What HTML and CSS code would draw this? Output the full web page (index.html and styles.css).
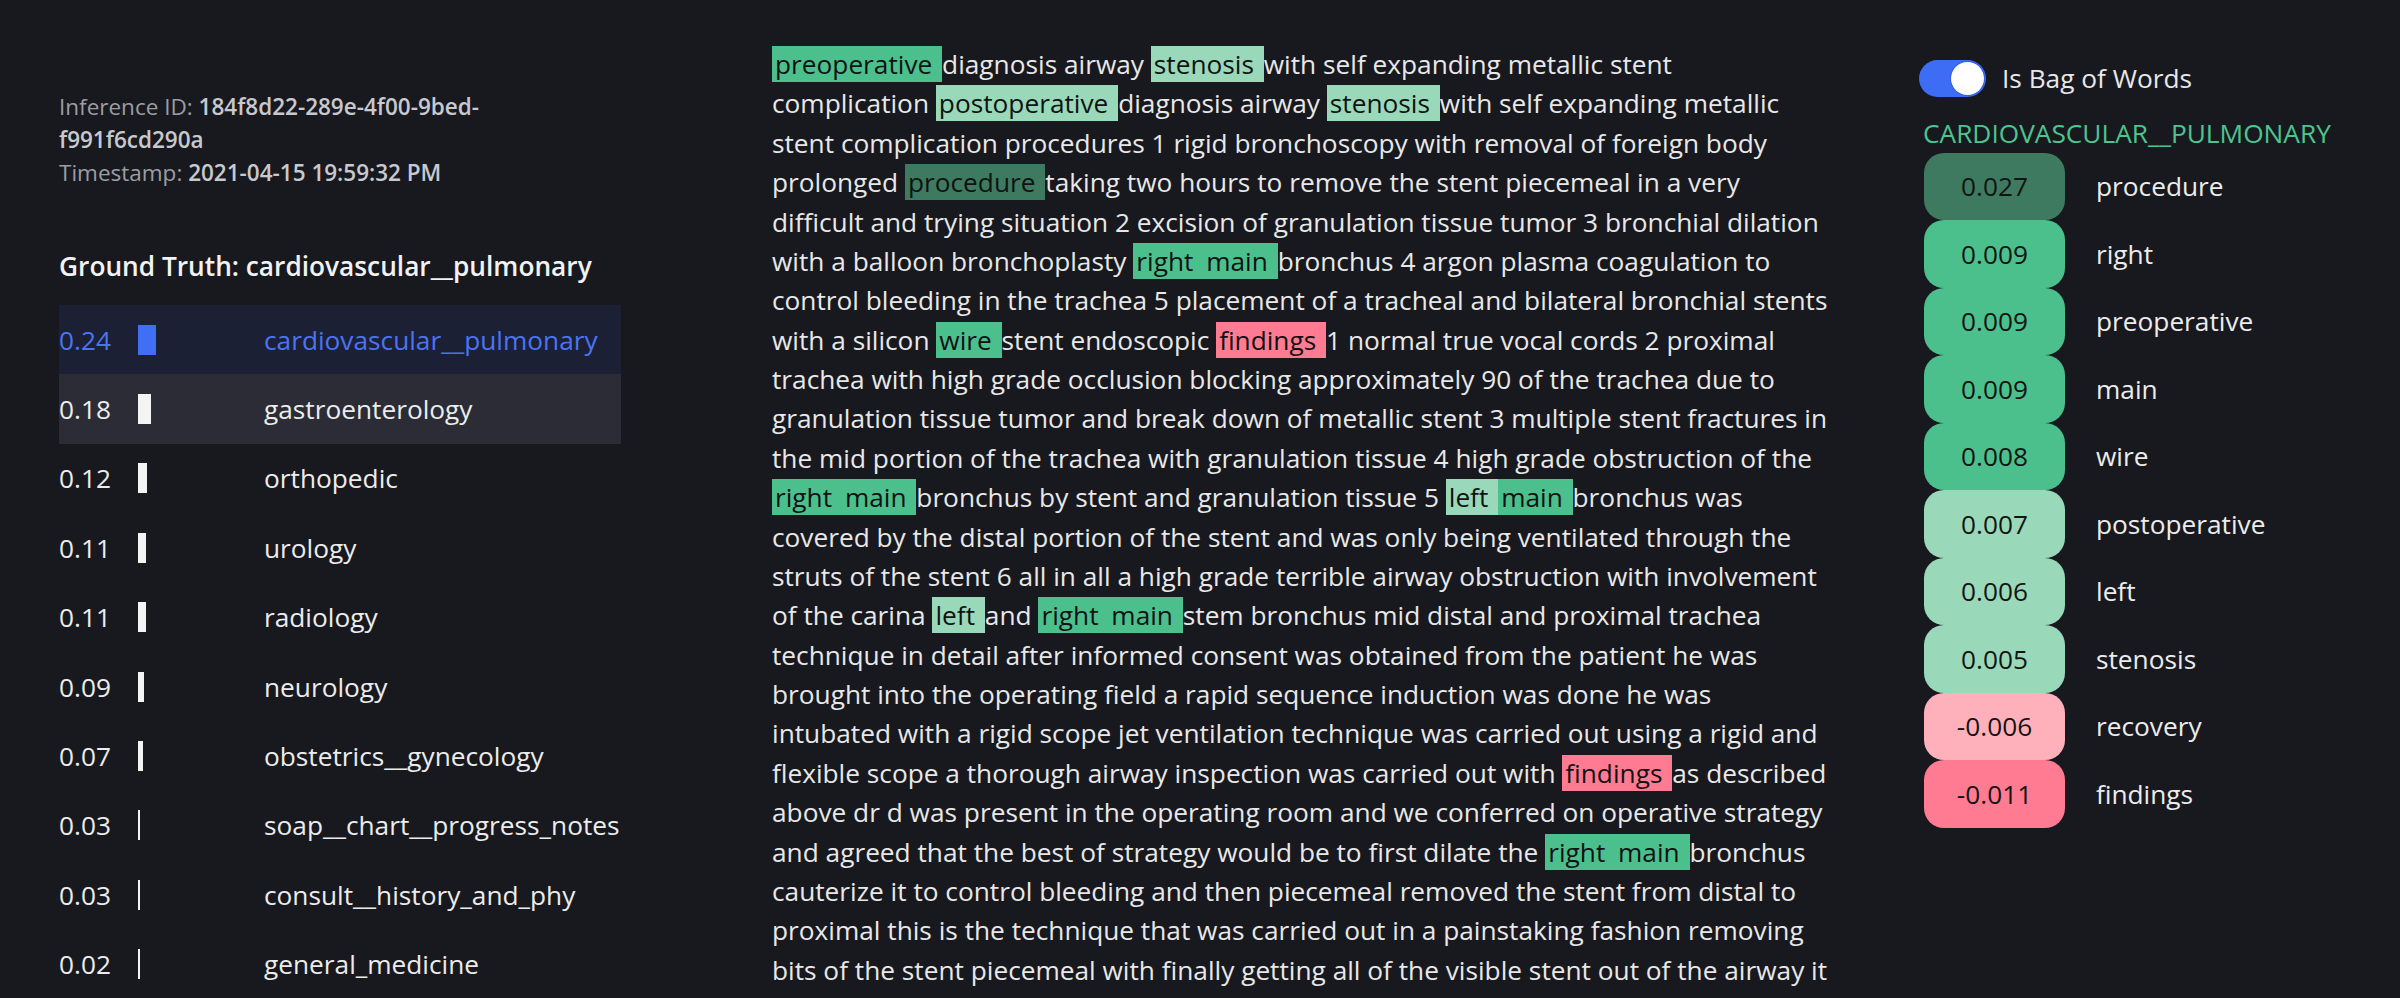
FILE: index.html
```html
<!DOCTYPE html>
<html lang="en">
<head>
<meta charset="utf-8">
<title>Inference explanation</title>
<link rel="stylesheet" href="styles.css">
</head>
<body>
<div class="page">
  <aside class="left">
    <div class="info">
      <div><span class="k">Inference ID: </span><span class="v">184f8d22-289e-4f00-9bed-f991f6cd290a</span></div>
      <div><span class="k">Timestamp: </span><span class="v">2021-04-15 19:59:32 PM</span></div>
    </div>
    <h2 class="gt">Ground Truth: cardiovascular__pulmonary</h2>
    <ul class="preds">
      <li class="pred active"><span class="num">0.24</span><span class="barcell"><span class="bar" style="width:18px"></span></span><span class="lbl">cardiovascular__pulmonary</span></li>
      <li class="pred hover"><span class="num">0.18</span><span class="barcell"><span class="bar" style="width:13.5px"></span></span><span class="lbl">gastroenterology</span></li>
      <li class="pred"><span class="num">0.12</span><span class="barcell"><span class="bar" style="width:9px"></span></span><span class="lbl">orthopedic</span></li>
      <li class="pred"><span class="num">0.11</span><span class="barcell"><span class="bar" style="width:8.25px"></span></span><span class="lbl">urology</span></li>
      <li class="pred"><span class="num">0.11</span><span class="barcell"><span class="bar" style="width:8.25px"></span></span><span class="lbl">radiology</span></li>
      <li class="pred"><span class="num">0.09</span><span class="barcell"><span class="bar" style="width:6.75px"></span></span><span class="lbl">neurology</span></li>
      <li class="pred"><span class="num">0.07</span><span class="barcell"><span class="bar" style="width:5.5px"></span></span><span class="lbl">obstetrics__gynecology</span></li>
      <li class="pred"><span class="num">0.03</span><span class="barcell"><span class="bar" style="width:2.5px"></span></span><span class="lbl">soap__chart__progress_notes</span></li>
      <li class="pred"><span class="num">0.03</span><span class="barcell"><span class="bar" style="width:2.25px"></span></span><span class="lbl">consult__history_and_phy</span></li>
      <li class="pred"><span class="num">0.02</span><span class="barcell"><span class="bar" style="width:2px"></span></span><span class="lbl">general_medicine</span></li>
    </ul>
  </aside>

  <main class="doc">
    <p class="doc-text"><mark class="hl g">preoperative </mark>diagnosis airway <mark class="hl l">stenosis </mark>with self expanding metallic stent<br>complication <mark class="hl l">postoperative </mark>diagnosis airway <mark class="hl l">stenosis </mark>with self expanding metallic<br>stent complication procedures 1 rigid bronchoscopy with removal of foreign body<br>prolonged <mark class="hl d">procedure </mark>taking two hours to remove the stent piecemeal in a very<br>difficult and trying situation 2 excision of granulation tissue tumor 3 bronchial dilation<br>with a balloon bronchoplasty <mark class="hl g">right </mark><mark class="hl g">main </mark>bronchus 4 argon plasma coagulation to<br>control bleeding in the trachea 5 placement of a tracheal and bilateral bronchial stents<br>with a silicon <mark class="hl g">wire </mark>stent endoscopic <mark class="hl p">findings </mark>1 normal true vocal cords 2 proximal<br>trachea with high grade occlusion blocking approximately 90 of the trachea due to<br>granulation tissue tumor and break down of metallic stent 3 multiple stent fractures in<br>the mid portion of the trachea with granulation tissue 4 high grade obstruction of the<br><mark class="hl g">right </mark><mark class="hl g">main </mark>bronchus by stent and granulation tissue 5 <mark class="hl l">left </mark><mark class="hl g">main </mark>bronchus was<br>covered by the distal portion of the stent and was only being ventilated through the<br>struts of the stent 6 all in all a high grade terrible airway obstruction with involvement<br>of the carina <mark class="hl l">left </mark>and <mark class="hl g">right </mark><mark class="hl g">main </mark>stem bronchus mid distal and proximal trachea<br>technique in detail after informed consent was obtained from the patient he was<br>brought into the operating field a rapid sequence induction was done he was<br>intubated with a rigid scope jet ventilation technique was carried out using a rigid and<br>flexible scope a thorough airway inspection was carried out with <mark class="hl p">findings </mark>as described<br>above dr d was present in the operating room and we conferred on operative strategy<br>and agreed that the best of strategy would be to first dilate the <mark class="hl g">right </mark><mark class="hl g">main </mark>bronchus<br>cauterize it to control bleeding and then piecemeal removed the stent from distal to<br>proximal this is the technique that was carried out in a painstaking fashion removing<br>bits of the stent piecemeal with finally getting all of the visible stent out of the airway it</p>
  </main>

  <aside class="right">
    <div class="toggle-row">
      <span class="switch"><span class="knob"></span></span>
      <span class="toggle-label">Is Bag of Words</span>
    </div>
    <div class="cls-title">CARDIOVASCULAR__PULMONARY</div>
    <ul class="scores">
      <li class="score"><span class="chip c-dark">0.027</span><span class="word">procedure</span></li>
      <li class="score"><span class="chip c-green">0.009</span><span class="word">right</span></li>
      <li class="score"><span class="chip c-green">0.009</span><span class="word">preoperative</span></li>
      <li class="score"><span class="chip c-green">0.009</span><span class="word">main</span></li>
      <li class="score"><span class="chip c-green">0.008</span><span class="word">wire</span></li>
      <li class="score"><span class="chip c-light">0.007</span><span class="word">postoperative</span></li>
      <li class="score"><span class="chip c-light">0.006</span><span class="word">left</span></li>
      <li class="score"><span class="chip c-light">0.005</span><span class="word">stenosis</span></li>
      <li class="score"><span class="chip c-pinklight">-0.006</span><span class="word">recovery</span></li>
      <li class="score"><span class="chip c-pink">-0.011</span><span class="word">findings</span></li>
    </ul>
  </aside>
</div>
</body>
</html>
```
FILE: styles.css
```css
html, body {
  margin: 0;
  padding: 0;
  background: #18191f;
  overflow: hidden;
}

body {
  font-family: "Open Sans", "Noto Sans", sans-serif;
  color: #e8e8e8;
}

.page {
  display: flex;
  align-items: flex-start;
  height: 998px;
  overflow: hidden;
}

/* ---------- left panel ---------- */
.left {
  flex: 0 0 562px;
  margin-left: 59px;
  padding-top: 90px;
}

.info {
  width: 480px;
  font-size: 22.5px;
  line-height: 33px;
  color: #9c9da3;
}

.info .v {
  color: #c8c9ce;
  font-weight: 600;
}

.gt {
  margin: 58px 0 19px;
  font-size: 26.25px;
  line-height: 39px;
  font-weight: 600;
  color: #f2f2f2;
}

.preds {
  list-style: none;
  margin: 0;
  padding: 0;
}

.pred {
  display: flex;
  align-items: center;
  height: 69.4px;
  font-size: 26.25px;
  color: #ececec;
}

.pred.active {
  background: #1c2034;
  color: #4a74f5;
}

.pred.hover {
  background: #2b2c35;
}

.num {
  flex: none;
  width: 78.5px;
}

.barcell {
  flex: none;
  width: 126.5px;
  display: flex;
  align-items: center;
}

.bar {
  display: block;
  height: 30px;
  background: #f4f4f4;
}

.active .bar {
  background: #3f6ff5;
}

/* ---------- middle document ---------- */
.doc {
  flex: 0 0 1056px;
  margin-left: 151px;
  padding-top: 45px;
}

.doc-text {
  margin: 0;
  font-size: 26.25px;
  line-height: 39.375px;
  color: #e8e8e8;
  white-space: nowrap;
}

.hl {
  padding: 0 3px;
  color: #111214;
}

.hl.g { background: #4bc08d; }
.hl.l { background: #99d9b9; }
.hl.d { background: #3e7a5f; }
.hl.p { background: #ff7b91; }

/* ---------- right panel ---------- */
.right {
  flex: none;
  margin-left: 91px;
  padding-top: 60px;
}

.toggle-row {
  display: flex;
  align-items: center;
  gap: 16px;
  height: 37px;
}

.switch {
  box-sizing: border-box;
  width: 67px;
  height: 37px;
  border-radius: 19px;
  background: #3d6cf5;
  display: flex;
  align-items: center;
  justify-content: flex-end;
  padding: 0 2px;
}

.knob {
  width: 33px;
  height: 33px;
  border-radius: 50%;
  background: #ffffff;
  box-shadow: 0 0 0 1px rgba(40, 80, 220, 0.5);
}

.toggle-label {
  font-size: 26.25px;
  line-height: 37px;
  color: #e8e8e8;
}

.cls-title {
  margin-top: 16.5px;
  padding-left: 4px;
  font-size: 26.25px;
  line-height: 39px;
  color: #4ec48e;
}

.scores {
  list-style: none;
  margin: 0;
  padding: 0 0 0 5px;
}

.score {
  display: flex;
  align-items: center;
  gap: 31px;
}

.chip {
  flex: none;
  width: 141px;
  height: 67.5px;
  border-radius: 20px;
  display: flex;
  align-items: center;
  justify-content: center;
  font-size: 26.25px;
  color: #141414;
}

.c-dark { background: #3e7a5f; }
.c-green { background: #4bc08d; }
.c-light { background: #99d9b9; }
.c-pinklight { background: #ffb1bb; }
.c-pink { background: #ff7b91; }

.word {
  font-size: 26.25px;
  color: #ececec;
}
```
